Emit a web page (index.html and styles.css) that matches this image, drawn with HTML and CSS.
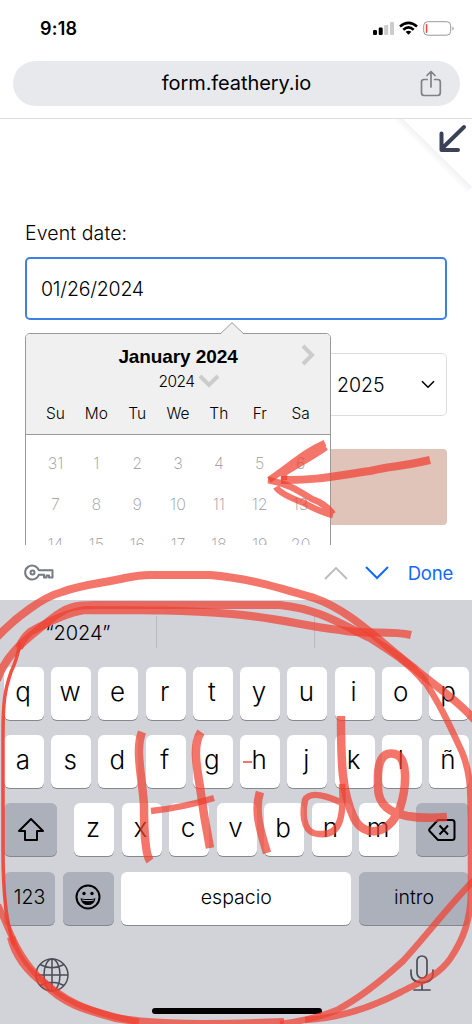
FILE: index.html
```
<!DOCTYPE html>
<html lang="es">
<head>
<meta charset="utf-8">
<title>form.feathery.io</title>
<link rel="stylesheet" href="styles.css">
</head>
<body>
<div class="phone">
  <header class="status">
    <span class="time">9:18</span>
    <svg class="status-icons" width="84" height="18" viewBox="0 0 84 18">
      <rect x="2" y="10" width="4" height="5" rx="1.3"/><rect x="7.7" y="7.5" width="4" height="7.5" rx="1.2"/>
      <g fill="#ccc"><rect x="13.2" y="5" width="4" height="10" rx="1"/><rect x="19" y="2" width="4" height="13" rx="1"/></g>
      <g fill="none" stroke="#000" stroke-width="2.6"><path d="M29 6.5Q37.5-.7 46 6.5M32.3 9.7Q37.5 5.2 42.7 9.7"/></g>
      <path d="M34.6 11.8Q37.5 9.6 40.4 11.8L37.5 14.7Z"/>
      <rect x="52.7" y="1.7" width="27" height="13.5" rx="4" fill="#fff" stroke="#999"/>
      <path d="M81.5 6.5q2.4 2 0 4z" fill="#888"/><rect x="54.8" y="4" width="1.5" height="9" rx=".7" fill="#f2483d"/>
    </svg>
  </header>
  <div class="address">
    <span class="url">form.feathery.io</span>
    <svg class="share" width="22" height="28" viewBox="0 0 22 28" fill="none" stroke="#7c8288" stroke-width="1.7" stroke-linecap="round" stroke-linejoin="round"><path d="M7.2 9.5H4Q1.5 9.5 1.5 12V22.5Q1.5 25.5 4 25.5H17.5Q20.3 25.5 20.3 22.5V12Q20.3 9.5 17.5 9.5H14.5M11 17V1.5M7 5.5L11 1.5L15 5.5"/></svg>
  </div>
  <main class="page">
    <svg class="corner" width="76" height="74" viewBox="0 0 76 74">
      <defs><linearGradient id="fold" x1="39" y1="31" x2="33" y2="37" gradientUnits="userSpaceOnUse"><stop stop-color="#f0f1f4"/><stop offset="1" stop-color="#fff"/></linearGradient></defs>
      <path d="M7 0L76 68L70 74L0 3V0Z" fill="url(#fold)"/>
      <path d="M68 8L46 29.500M45.500 14.500V31H62" fill="none" stroke="#3b4257" stroke-width="4" stroke-linecap="round" stroke-linejoin="round"/>
    </svg>
    <div class="field-label">Event date:</div>
    <div class="date-input">01/26/2024</div>
    <div class="select"><span>2025</span><svg width="14" height="9" viewBox="0 0 14 9" fill="none" stroke="#000" stroke-width="1.6"><path d="M1 1.2L7 7.2L13 1.2"/></svg></div>
    <div class="submit"></div>
    <section class="calendar">
      <svg class="tip" width="22" height="12" viewBox="0 0 22 12"><path d="M0 11.2L11 .7L22 11.2V12H0Z" fill="#f0f0f0"/><path d="M0 11.2L11 .7L22 11.2" fill="none" stroke="#999"/></svg>
      <div class="cal-head">
        <div class="month">January 2024</div>
        <div class="year"><span>2024</span><svg width="22" height="14" viewBox="0 0 22 14" fill="none" stroke="#ccc" stroke-width="4"><path d="M2 2L11 11L20 2"/></svg></div>
        <svg class="next" width="14" height="22" viewBox="0 0 14 22" fill="none" stroke="#ccc" stroke-width="4"><path d="M2 2L11 11L2 20"/></svg>
        <div class="week names"><span>Su</span><span>Mo</span><span>Tu</span><span>We</span><span>Th</span><span>Fr</span><span>Sa</span></div>
      </div>
      <div class="week first"><span>31</span><span>1</span><span>2</span><span>3</span><span>4</span><span>5</span><span>6</span></div>
      <div class="week"><span>7</span><span>8</span><span>9</span><span>10</span><span>11</span><span>12</span><span>13</span></div>
      <div class="week"><span>14</span><span>15</span><span>16</span><span>17</span><span>18</span><span>19</span><span>20</span></div>
    </section>
  </main>
  <div class="accessory">
    <svg width="30" height="18" viewBox="0 0 30 18" fill="none" stroke="#747b82" stroke-width="2" stroke-linejoin="round"><path d="M14.8 6.3A7 7 0 1 0 14.800 10.700H20V13.500H22.500V11.500H25V13.500H28.500V6.300Z"/><circle cx="8.500" cy="8.500" r="2"/></svg>
    <div class="steps">
      <svg width="24" height="14" viewBox="0 0 24 14" fill="none" stroke="#bbb" stroke-width="1.8"><path d="M1 13L12 2L23 13"/></svg>
      <svg width="24" height="14" viewBox="0 0 24 14" fill="none" stroke="#1269ff" stroke-width="2"><path d="M1 1L12 12L23 1"/></svg>
      <span class="done">Done</span>
    </div>
  </div>
  <section class="keyboard">
    <div class="suggestions"><span>“2024”</span><span></span><span></span></div>
    <div class="row"><b>q</b><b>w</b><b>e</b><b>r</b><b>t</b><b>y</b><b>u</b><b>i</b><b>o</b><b>p</b></div>
    <div class="row"><b>a</b><b>s</b><b>d</b><b>f</b><b>g</b><b>h</b><b>j</b><b>k</b><b>l</b><b>ñ</b></div>
    <div class="row third">
      <b class="gray shift"><svg width="28" height="25" viewBox="0 0 28 25" fill="none" stroke="#000" stroke-width="2" stroke-linejoin="round"><path d="M14 2L26 14H20V23H8V14H2Z"/></svg></b>
      <div class="letters"><b>z</b><b>x</b><b>c</b><b>v</b><b>b</b><b>n</b><b>m</b></div>
      <b class="gray delete"><svg width="28" height="24" viewBox="0 0 28 24" fill="none" stroke="#000" stroke-width="2" stroke-linejoin="round"><path d="M10 2H24Q26.5 2 26.5 4.5V20Q26.5 22 24 22H10L1.5 13Q.8 12 1.5 11ZM11.500 7.5L20 16.5M20 7.5L11.500 16.5"/></svg></b>
    </div>
    <div class="row fourth">
      <b class="gray">123</b>
      <b class="gray"><svg width="26" height="26" viewBox="0 0 26 26"><circle cx="13" cy="13" r="11.5" fill="none" stroke="#000" stroke-width="2"/><circle cx="9" cy="9.5" r="1.7"/><circle cx="17" cy="9.5" r="1.7"/><path d="M5.5 14.2Q13 16 20.5 14.2Q19.5 21 13 21T5.5 14.2Z"/><path d="M7.2 16Q13 17.4 18.8 16" fill="none" stroke="#abb0bb" stroke-width="1.2"/></svg></b>
      <b>espacio</b><b class="gray">intro</b>
    </div>
    <div class="tools">
      <svg width="34" height="34" viewBox="0 0 34 34" fill="none" stroke="#4b4e56" stroke-width="1.5"><circle cx="17" cy="17" r="16"/><ellipse cx="17" cy="17" rx="8" ry="16"/><path d="M17 1V33M1 17H33M5 6.5Q17 13 29 6.5M5 27.5Q17 21 29 27.5"/></svg>
      <svg width="26" height="36" viewBox="0 0 26 36" fill="none" stroke="#4b4e56" stroke-width="1.7" stroke-linecap="round"><rect x="8" y="1" width="10" height="22" rx="5"/><path d="M2 15V18Q2 27.5 13 27.5T24 18V15M13 28V35M5 35H21"/></svg>
    </div>
    <div class="home"></div>
  </section>
  <svg class="drawing" width="472" height="1024" viewBox="0 0 472 1024">
    <g class="marker">
      <path d="M430 460C400 467 390 466 370 471C340 475 315 481 281 480"/>
      <path class="thin" d="M325 443C305 452 296 461 269 480M326 447C315 455 302 462 284 473V480"/>
      <path class="thin" d="M268 480C290 484 300 492 312 499Q326 504 333 514M276 487Q280 494 304 503Q320 512 333 515"/>
      <path d="M-3 637C16 617 43 597 62 592C84 584 105 583 125 578Q140 575 150 575H210C247 578 277 587 314 598C350 610 380 642 414 668C432 684 452 695 475 720"/>
      <path d="M411 635C390 630 365 635 340 630C303 626 280 618 232 614C185 610 143 610 85 610C66 613 46 623 30 632Q22 639 19 648"/>
      <path d="M-3 680C8 650 29 638 50 620C67 606 76 605 95 605H280C318 609 339 623 370 638C395 654 411 664 425 682"/>
      <path class="fine" d="M20 643Q17 660 11 672C5 690 3 700 3 735V850C3 900 7 924 14 945"/>
      <path class="thin" d="M425 682C440 704 451 728 462 752C472 777 470 795 471 820V890C471 920 463 940 450 959C438 976 422 981 401 992C378 1004 343 1018 305 1020"/>
      <path d="M11 937C16 958 31 974 45 984C63 1003 83 1009 115 1018C155 1025 208 1025 284 1022"/>
      <path class="thin" d="M-2 905C9 930 17 954 37 975C63 1001 86 1011 139 1022"/>
      <path class="thin" d="M474 880C446 909 426 936 403 961C380 982 354 1001 337 1010Q313 1020 280 1024"/>
      <path class="letter" d="M142 732C135 750 142 776 144 805C144 830 145 854 150 861"/>
      <path class="letter" d="M201 732C192 745 197 768 200 787Q204 818 210 848"/>
      <path class="thin" d="M151 811Q181 808 214 798"/>
      <path class="dash" d="M243 762H252"/>
      <path class="letter" d="M260 792C254 810 260 830 267 853"/>
      <path class="thin" d="M340 802Q311 789 305 800C301 820 306 835 320 834C341 836 344 815 342 784"/>
      <path class="letter" d="M341 716C341 765 342 792 354 818C364 838 388 836 400 808C407 786 408 757 395 754C382 751 377 762 378 784C377 807 392 813 407 816Q424 819 447 817"/>
    </g>
  </svg>
</div>
</body>
</html>
```
FILE: styles.css
```
* { box-sizing: border-box; }
body { margin: 0; background: #fff; color: #000; font-family: Inter, sans-serif; }
svg { display: block; flex: none; }
.phone { position: relative; width: 472px; height: 1024px; overflow: hidden; }
.status { height: 61px; padding: 19px 17px 0 40px; display: flex; justify-content: space-between; }
.time { font-size: 18px; line-height: 20px; font-weight: 600; letter-spacing: .2px; }
.status-icons { margin-top: 1px; }
.address { height: 45px; margin: 0 12px 12px 13px; border-radius: 23px; background: #e8e9ed; display: grid; grid-template-columns: 1fr auto 1fr; align-items: center; padding-right: 18px; }
.url { grid-column: 2; font-size: 20px; line-height: 24px; margin-bottom: 2px; padding-left: 18px; letter-spacing: -.08px; }
.share { justify-self: end; }
.page { position: relative; height: 427px; overflow: hidden; border-top: 1px solid #dedede; padding: 102px 25px 0; }
.corner { position: absolute; right: 0; top: 0; }
.field-label { font-size: 19.5px; line-height: 24px; font-weight: 300; letter-spacing: .1px; }
.date-input { margin-top: 12px; height: 63px; border: 2px solid #3f80e4; border-radius: 5px; padding: 0 14px; font-size: 19.5px; line-height: 60px; font-weight: 300; letter-spacing: -.2px; }
.select { height: 63px; margin-top: 33px; border: 1px solid #ddd; border-radius: 5px; padding: 0 11px 0 311px; display: flex; align-items: center; justify-content: space-between; font-size: 19.5px; font-weight: 300; }
.submit { height: 76px; margin-top: 33px; border-radius: 4px; background: #e0c3b9; }
.calendar { position: absolute; left: 25px; top: 214px; width: 306px; height: 250px; border: 1px solid #999; border-radius: 5px; background: #fff; }
.tip { position: absolute; left: 195px; top: -12px; }
.cal-head { position: relative; height: 101px; border-bottom: 1px solid #999; border-radius: 4px 4px 0 0; background: #f0f0f0; padding-top: 12px; }
.month { font: bold 19px/22px "Liberation Sans", sans-serif; text-align: center; letter-spacing: -.1px; }
.year { display: flex; align-items: center; justify-content: center; gap: 3px; height: 22px; margin-top: 2px; padding-left: 22px; font-size: 15.5px; font-weight: 300; letter-spacing: -.5px; }
.next { position: absolute; right: 15px; top: 10px; }
.week { height: 40.5px; padding: 0 9px; display: grid; grid-template-columns: repeat(7, 1fr); align-items: center; text-align: center; font-size: 16px; font-weight: 200; color: #999; }
.week.first { margin-top: 8px; }
.week.names { height: 20px; margin-top: 11px; color: #000; font-size: 15.5px; font-weight: 300; }
.accessory { height: 55px; padding: 0 19px 0 24px; display: flex; align-items: center; justify-content: space-between; }
.steps { display: flex; align-items: center; gap: 17px; }
.done { color: #1269ff; font-size: 18.5px; line-height: 24px; margin-left: 2px; letter-spacing: -.2px; }
.keyboard { height: 424px; background: #d1d3d9; padding: 16px 3px 0 4px; }
.suggestions { height: 51px; display: grid; grid-template-columns: 153px 158px 1fr; text-align: center; font-size: 20px; line-height: 34px; font-weight: 350; letter-spacing: -.1px; }
.suggestions span { height: 32px; padding-right: 4px; border-right: 1px solid #b9bac0; }
.suggestions span:last-child { border: 0; }
.row { height: 53px; margin-bottom: 15px; display: flex; justify-content: space-between; }
.row b { width: 40px; height: 53px; border-radius: 6px; background: #fff; box-shadow: 0 1px 0 #85888e; display: flex; justify-content: center; align-items: center; font-weight: 350; font-size: 26px; line-height: 30px; padding: 0 2px 4px 0; }
.row b.gray { background: #abb0bb; }
.row .shift, .row .delete { width: 53px; padding: 0; }
.row .delete { padding-right: 2px; }
.letters { width: 325px; display: flex; justify-content: space-between; }
.row.fourth { display: grid; grid-template-columns: 51px 51px 230px 110px; column-gap: 7.6px; margin: 0; padding-top: 1px; }
.row.fourth b { width: auto; font-size: 19.5px; padding: 0 0 3px; }
.tools { display: flex; justify-content: space-between; align-items: center; padding: 29px 34px 0 31px; }
.tools svg:first-child { margin-top: 5px; }
.home { width: 170px; height: 6px; margin: 16px auto 0 148px; border-radius: 3px; background: #000; }
.drawing { position: absolute; left: 0; top: 0; pointer-events: none; }
.marker { fill: none; stroke: #f04030; stroke-width: 8; stroke-opacity: .72; stroke-linejoin: round; }
.marker .thin { stroke-width: 6.5; }
.marker .fine { stroke-width: 3.5; stroke-opacity: .9; }
.marker .letter { stroke-width: 8.5; }
.marker .dash { stroke-width: 2; }
```
